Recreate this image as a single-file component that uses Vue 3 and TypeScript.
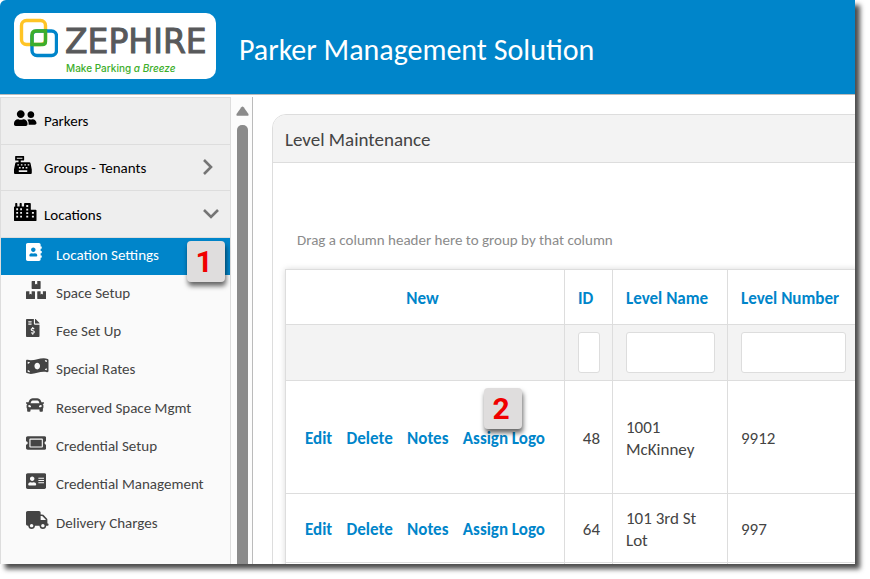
<script setup lang="ts">
import { ref } from 'vue'

interface Icon {
  w: number
  d: string
}

interface Row {
  id: number
  name: string
  number: string
  step?: number
  tall?: boolean
}

const icons: Record<string, Icon> = {
  users: {
    w: 640,
    d: 'M192 256c61.9 0 112-50.1 112-112S253.9 32 192 32 80 82.1 80 144s50.1 112 112 112zm76.8 32h-8.3c-20.8 10-43.9 16-68.5 16s-47.6-6-68.5-16h-8.3C51.6 288 0 339.6 0 403.2V432c0 26.5 21.5 48 48 48h288c26.5 0 48-21.5 48-48v-28.8c0-63.6-51.6-115.2-115.2-115.2zM480 256c53 0 96-43 96-96s-43-96-96-96-96 43-96 96 43 96 96 96zm48 32h-3.8c-13.9 4.8-28.6 8-44.2 8s-30.3-3.2-44.2-8H432c-20.4 0-39.2 5.9-55.7 15.4 24.4 26.3 39.7 61.2 39.7 99.8v38.4c0 2.2-.5 4.3-.6 6.4H592c26.5 0 48-21.5 48-48 0-61.9-50.1-112-112-112z',
  },
  register: {
    w: 512,
    d: 'M48 0h224a16 16 0 0 1 16 16v96a16 16 0 0 1-16 16h-80v48h240a40 40 0 0 1 40 34l34 174v96a32 32 0 0 1-32 32H32a32 32 0 0 1-32-32v-96l34-174a40 40 0 0 1 40-34h54v-48H48a16 16 0 0 1-16-16V16A16 16 0 0 1 48 0zM80 48v32h160V48zM96 232v40h44v-40zM196 232v40h44v-40zM296 232v40h44v-40zM390 232v40h44v-40zM140 312v40h48v-40zM236 312v40h48v-40zM332 312v40h48v-40zM136 408v48h240v-48z',
  },
  city: {
    w: 640,
    d: 'M48 0h32q14 0 14 14v82h66V14q0-14 14-14h32q14 0 14 14v82h66V24q0-24 24-24h144q24 0 24 24v168h138q24 0 24 24v272q0 24-24 24H24q-24 0-24-24V120q0-24 24-24h10V14Q34 0 48 0zM64 152v52h52v-52zM176 152v52h52v-52zM64 256v52h52v-52zM176 256v52h52v-52zM64 360v52h52v-52zM176 360v52h52v-52zM348 60v52h56V60zM348 160v52h56v-52zM348 260v52h56v-52zM348 360v52h56v-52zM510 256v52h56v-52zM510 360v52h56v-52z',
  },
  book: {
    w: 448,
    d: 'M436 160c6.6 0 12-5.4 12-12v-40c0-6.6-5.4-12-12-12h-20V48c0-26.5-21.5-48-48-48H48C21.5 0 0 21.5 0 48v416c0 26.5 21.5 48 48 48h320c26.5 0 48-21.5 48-48v-48h20c6.6 0 12-5.4 12-12v-40c0-6.6-5.4-12-12-12h-20v-64h20c6.6 0 12-5.4 12-12v-40c0-6.6-5.4-12-12-12h-20v-64h20zm-228-32c35.3 0 64 28.7 64 64s-28.7 64-64 64-64-28.7-64-64 28.7-64 64-64zm112 236.8c0 10.6-10 19.2-22.4 19.2H118.4C106 384 96 375.4 96 364.8v-19.2c0-31.8 30.1-57.6 67.2-57.6h5c12.3 5.1 25.7 8 39.8 8s27.6-2.9 39.8-8h5c37.1 0 67.2 25.8 67.2 57.6v19.2z',
  },
  boxes: {
    w: 576,
    d: 'M560 288h-80v96l-32-21.3-32 21.3v-96h-80c-8.8 0-16 7.2-16 16v192c0 8.8 7.2 16 16 16h224c8.8 0 16-7.2 16-16V304c0-8.8-7.2-16-16-16zm-384-64h224c8.8 0 16-7.2 16-16V16c0-8.8-7.2-16-16-16h-80v96l-32-21.3L256 96V0h-80c-8.8 0-16 7.2-16 16v192c0 8.8 7.2 16 16 16zm64 64h-80v96l-32-21.3L96 384v-96H16c-8.8 0-16 7.2-16 16v192c0 8.8 7.2 16 16 16h224c8.8 0 16-7.2 16-16V304c0-8.8-7.2-16-16-16z',
  },
  invoice: {
    w: 384,
    d: 'M377 105L279.1 7c-4.5-4.5-10.6-7-17-7H256v128h128v-6.1c0-6.3-2.5-12.4-7-16.9zm-153 31V0H24C10.7 0 0 10.7 0 24v464c0 13.3 10.7 24 24 24h336c13.3 0 24-10.7 24-24V160H248c-13.2 0-24-10.8-24-24zM64 72c0-4.42 3.58-8 8-8h80c4.42 0 8 3.58 8 8v16c0 4.42-3.58 8-8 8H72c-4.42 0-8-3.58-8-8V72zm0 80v-16c0-4.42 3.58-8 8-8h80c4.42 0 8 3.58 8 8v16c0 4.42-3.58 8-8 8H72c-4.42 0-8-3.58-8-8zm144 263.88V440c0 4.42-3.58 8-8 8h-16c-4.42 0-8-3.58-8-8v-24.29c-11.29-.58-22.27-4.52-31.37-11.35-3.9-2.93-4.1-8.77-.57-12.14l11.75-11.21c2.77-2.64 6.89-2.76 10.13-.73 3.87 2.42 8.26 3.72 12.82 3.72h28.11c6.5 0 11.8-5.92 11.8-13.19 0-5.95-3.61-11.19-8.77-12.73l-45-13.5c-18.59-5.58-31.58-23.42-31.58-43.39 0-24.52 19.05-44.44 42.67-45.07V232c0-4.42 3.58-8 8-8h16c4.42 0 8 3.58 8 8v24.29c11.29.58 22.27 4.51 31.37 11.35 3.9 2.93 4.1 8.77.57 12.14l-11.75 11.21c-2.77 2.64-6.89 2.76-10.13.73-3.87-2.43-8.26-3.72-12.82-3.72h-28.11c-6.5 0-11.8 5.92-11.8 13.19 0 5.95 3.61 11.19 8.77 12.73l45 13.5c18.59 5.58 31.58 23.42 31.58 43.39 0 24.53-19.05 44.44-42.67 45.07z',
  },
  money: {
    w: 640,
    d: 'M621.16 54.46C582.37 38.19 543.55 32 504.75 32c-123.17-.01-246.33 62.34-369.5 62.34-30.89 0-61.76-3.92-92.65-13.72-3.47-1.1-6.95-1.62-10.35-1.62C15.04 79 0 92.32 0 110.81v317.26c0 12.63 7.23 24.6 18.84 29.46C57.63 473.81 96.45 480 135.25 480c123.17 0 246.34-62.35 369.51-62.35 30.89 0 61.76 3.92 92.65 13.72 3.47 1.1 6.95 1.62 10.35 1.62 17.21 0 32.25-13.32 32.25-31.81V83.93c-.01-12.64-7.24-24.6-18.85-29.47zM48 132.22c20.12 5.04 41.12 7.57 62.72 8.93C104.84 170.54 79 192.69 48 192.69v-60.47zm0 285v-47.78c34.37 0 62.18 27.27 63.71 61.4-22.53-1.81-43.59-6.31-63.71-13.62zM320 352c-44.19 0-80-42.99-80-96 0-53.02 35.82-96 80-96s80 42.98 80 96c0 53.03-35.83 96-80 96zm272 27.78c-17.52-4.39-35.71-6.85-54.32-8.44 5.87-26.08 27.5-45.88 54.32-49.28v57.72zm0-236.11c-30.89-3.91-54.86-29.7-55.81-61.55 19.54 2.17 38.09 6.23 55.81 12.66v48.89z',
  },
  car: {
    w: 512,
    d: 'M499.99 176h-59.87l-16.64-41.6C406.38 91.63 365.57 64 319.5 64h-127c-46.06 0-86.88 27.63-103.99 70.4L71.87 176H12.01C4.2 176-1.53 183.34.37 190.91l6 24C7.7 220.25 12.5 224 18.01 224h20.07C24.65 235.73 16 252.78 16 272v48c0 16.12 6.16 30.67 16 41.93V416c0 17.67 14.33 32 32 32h32c17.67 0 32-14.33 32-32v-32h256v32c0 17.67 14.33 32 32 32h32c17.67 0 32-14.33 32-32v-54.07c9.84-11.25 16-25.8 16-41.93v-48c0-19.22-8.65-36.27-22.07-48H494c5.51 0 10.31-3.75 11.64-9.09l6-24c1.89-7.57-3.84-14.91-11.65-14.91zm-352.06-17.83c7.29-18.22 24.94-30.17 44.57-30.17h127c19.63 0 37.28 11.95 44.57 30.17L384 208H128l19.93-49.83zM96 319.8c-19.2 0-32-12.76-32-31.9S76.8 256 96 256s48 28.71 48 47.85-28.8 15.95-48 15.95zm320 0c-19.2 0-48 3.19-48-15.95S396.8 256 416 256s32 12.76 32 31.9-12.8 31.9-32 31.9z',
  },
  ticket: {
    w: 576,
    d: 'M128 160h320v192H128V160zm400 96c0 26.51 21.49 48 48 48v96c0 26.51-21.49 48-48 48H48c-26.51 0-48-21.49-48-48v-96c26.51 0 48-21.49 48-48s-21.49-48-48-48v-96c0-26.51 21.49-48 48-48h480c26.51 0 48 21.49 48 48v96c-26.51 0-48 21.49-48 48zm-48-104c0-13.255-10.745-24-24-24H120c-13.255 0-24 10.745-24 24v208c0 13.255 10.745 24 24 24h336c13.255 0 24-10.745 24-24V152z',
  },
  card: {
    w: 576,
    d: 'M528 32H48C21.5 32 0 53.5 0 80v352c0 26.5 21.5 48 48 48h480c26.5 0 48-21.5 48-48V80c0-26.5-21.5-48-48-48zm-352 96c35.3 0 64 28.7 64 64s-28.7 64-64 64-64-28.7-64-64 28.7-64 64-64zm112 236.8c0 10.6-10 19.2-22.4 19.2H86.4C74 384 64 375.4 64 364.8v-19.2c0-31.8 30.1-57.6 67.2-57.6h5c12.3 5.1 25.7 8 39.8 8s27.6-2.9 39.8-8h5c37.1 0 67.2 25.8 67.2 57.6v19.2zM352 288h160v32H352zM352 224h160v32H352zM352 160h160v32H352z',
  },
  truck: {
    w: 640,
    d: 'M624 352h-16V243.9c0-12.7-5.1-24.9-14.1-33.9L494 110.1c-9-9-21.2-14.1-33.9-14.1H416V48c0-26.5-21.5-48-48-48H48C21.5 0 0 21.5 0 48v320c0 26.5 21.5 48 48 48h16c0 53 43 96 96 96s96-43 96-96h128c0 53 43 96 96 96s96-43 96-96h48c8.8 0 16-7.2 16-16v-32c0-8.8-7.2-16-16-16zM160 464c-26.5 0-48-21.5-48-48s21.5-48 48-48 48 21.5 48 48-21.5 48-48 48zm320 0c-26.5 0-48-21.5-48-48s21.5-48 48-48 48 21.5 48 48-21.5 48-48 48zm80-208H416V144h44.1l99.9 99.9V256z',
  },
}

const sections = [
  { label: 'Parkers', icon: 'users', arrow: '' },
  { label: 'Groups - Tenants', icon: 'register', arrow: 'M4 3l7 7-7 7' },
  { label: 'Locations', icon: 'city', arrow: 'M4 6l7 7 7-7' },
]

const pages = [
  { label: 'Location Settings', icon: 'book', step: 1 },
  { label: 'Space Setup', icon: 'boxes' },
  { label: 'Fee Set Up', icon: 'invoice' },
  { label: 'Special Rates', icon: 'money' },
  { label: 'Reserved Space Mgmt', icon: 'car' },
  { label: 'Credential Setup', icon: 'ticket' },
  { label: 'Credential Management', icon: 'card' },
  { label: 'Delivery Charges', icon: 'truck' },
]

const current = ref('Location Settings')

const rows: Row[] = [
  { id: 48, name: '1001 McKinney', number: '9912', step: 2, tall: true },
  { id: 64, name: '101 3rd St Lot', number: '997' },
]

const filters = ref({ id: '', name: '', number: '' })
</script>

<template>
  <div class="stage">
    <div class="window">
      <header class="top">
        <a class="brand" href="#">
          <svg class="mark" viewBox="0 0 39 40" aria-hidden="true">
            <rect x="2.5" y="2.5" width="24" height="24" rx="5" fill="none" stroke="#ffc425" stroke-width="3.4" />
            <rect x="13" y="13" width="24.5" height="24.5" rx="5" fill="none" stroke="#0085ca" stroke-width="3.4" />
            <path d="M13 26.5V17q0-4 4-4h9.500v10.500q0 3-3 3z" fill="none" stroke="#3dae2b" stroke-width="3.4" />
          </svg>
          <span class="words">
            <span class="name">ZEPHIRE</span>
            <span class="tag">Make Parking <em>a Breeze</em></span>
          </span>
        </a>
        <h1>Parker Management Solution</h1>
      </header>

      <div class="body">
        <nav class="side">
          <div class="sections">
            <button v-for="s in sections" :key="s.label" type="button" class="section">
              <span class="icon">
                <svg :viewBox="`0 0 ${icons[s.icon].w} 512`" height="18" aria-hidden="true">
                  <path :d="icons[s.icon].d" fill="currentColor" fill-rule="evenodd" />
                </svg>
              </span>
              <span class="label">{{ s.label }}</span>
              <svg v-if="s.arrow" class="arrow" viewBox="0 0 24 22" width="24" height="22" aria-hidden="true">
                <path :d="s.arrow" fill="none" stroke="#757575" stroke-width="2.6" />
              </svg>
            </button>
          </div>
          <ul class="pages">
            <li v-for="p in pages" :key="p.label">
              <a href="#" :class="{ active: current === p.label }" @click.prevent="current = p.label">
                <span class="icon">
                  <svg :viewBox="`0 0 ${icons[p.icon].w} 512`" height="18" aria-hidden="true">
                    <path :d="icons[p.icon].d" fill="currentColor" fill-rule="evenodd" />
                  </svg>
                </span>
                <span class="label">{{ p.label }}</span>
              </a>
              <span v-if="p.step" class="step step-nav">{{ p.step }}</span>
            </li>
          </ul>
        </nav>

        <div class="scroll" aria-hidden="true">
          <svg viewBox="0 0 13 10" width="13" height="10">
            <path d="M5.3 1.2q1.2-1.6 2.4 0l4.6 6.6q.9 2-1 2H1.7q-1.9 0-1-2z" fill="#8b8b8b" />
          </svg>
          <span class="thumb"></span>
        </div>

        <main class="content">
          <section class="panel">
            <h2>Level Maintenance</h2>
            <div class="inner">
              <p class="hint">Drag a column header here to group by that column</p>
              <table>
                <colgroup>
                  <col class="c-act" />
                  <col class="c-id" />
                  <col class="c-name" />
                  <col />
                </colgroup>
                <thead>
                  <tr class="heads">
                    <th class="new"><a href="#">New</a></th>
                    <th>ID</th>
                    <th>Level Name</th>
                    <th>Level Number</th>
                  </tr>
                  <tr class="filters">
                    <td></td>
                    <td><input v-model="filters.id" type="text" aria-label="ID" /></td>
                    <td><input v-model="filters.name" type="text" aria-label="Level Name" /></td>
                    <td><input v-model="filters.number" type="text" aria-label="Level Number" /></td>
                  </tr>
                </thead>
                <tbody>
                  <tr v-for="r in rows" :key="r.id" :class="{ tall: r.tall }">
                    <td class="act">
                      <div class="links">
                        <a href="#">Edit</a>
                        <a href="#">Delete</a>
                        <a href="#">Notes</a>
                        <a href="#">Assign Logo</a>
                        <span v-if="r.step" class="step step-row">{{ r.step }}</span>
                      </div>
                    </td>
                    <td class="num">{{ r.id }}</td>
                    <td>{{ r.name }}</td>
                    <td>{{ r.number }}</td>
                  </tr>
                  <tr aria-hidden="true"><td></td><td></td><td></td><td></td></tr>
                </tbody>
              </table>
            </div>
          </section>
        </main>
      </div>
    </div>
  </div>
</template>

<style>
body {
  margin: 0;
  background: #fff;
}
</style>

<style scoped>
* {
  box-sizing: border-box;
}

.stage {
  height: 100vh;
  padding: 0 15px 15px 0;
  overflow: hidden;
}

.window {
  display: flex;
  flex-direction: column;
  height: 100%;
  overflow: hidden;
  border-top-left-radius: 6px;
  background: #fff;
  color: #444;
  font-family: Carlito, Lato, sans-serif;
  font-size: 17px;
  box-shadow: 5px 5px 5px rgba(0, 0, 0, 0.7);
}

a {
  color: #0085ca;
  text-decoration: none;
}

.top {
  display: flex;
  flex: none;
  align-items: center;
  gap: 23px;
  height: 95px;
  padding: 0 14px 2px;
  border-bottom: 1px solid #bbb;
  background: #0085ca;
}

.brand {
  display: flex;
  gap: 7px;
  width: 202px;
  height: 66px;
  padding: 5px;
  border-radius: 10px;
  background: #fff;
}

.mark {
  flex: none;
  width: 39px;
  height: 40px;
}

.words {
  display: flex;
  flex-direction: column;
  padding-top: 6px;
}

.name {
  color: #58595b;
  font-family: "DejaVu Sans", sans-serif;
  font-size: 33px;
  line-height: 36px;
  -webkit-text-stroke: 1px #58595b;
}

.tag {
  padding-left: 1px;
  color: #3dae2b;
  font-family: Inter, sans-serif;
  font-size: 10px;
  font-weight: 500;
  line-height: 16px;
  white-space: nowrap;
}

h1 {
  margin: 0;
  padding-top: 6px;
  color: #fff;
  font-size: 30px;
  font-weight: 400;
  white-space: nowrap;
}

.body {
  display: flex;
  flex: 1;
  min-height: 0;
  padding-top: 2px;
}

.side {
  flex: none;
  width: 231px;
  border: 1px solid #ddd;
  border-bottom: 0;
  background: #fafafa;
  font-size: 15px;
}

.sections {
  display: grid;
  grid-template-rows: repeat(3, 1fr);
  height: 140px;
}

.section {
  display: flex;
  align-items: center;
  width: 100%;
  padding: 1px 6px 0 13px;
  border: 0;
  border-bottom: 1px solid #ddd;
  background: #eee;
  color: #000;
  font: inherit;
  text-align: left;
}

.icon {
  display: flex;
  flex: none;
  width: 30px;
  padding-bottom: 6px;
}

.label {
  flex: 1;
  white-space: nowrap;
}

.arrow {
  flex: none;
}

.pages {
  display: grid;
  grid-template-rows: repeat(8, 1fr);
  height: 307px;
  margin: 0;
  padding: 0;
  list-style: none;
}

.pages li {
  position: relative;
}

.pages a {
  display: flex;
  align-items: center;
  height: 100%;
  padding: 0 6px 6px 25px;
  color: #444;
}

.pages a.active {
  height: 37px;
  padding-bottom: 4px;
  background: #0085ca;
  color: #fff;
}

.step {
  position: absolute;
  z-index: 2;
  width: 38px;
  height: 41px;
  padding-right: 4px;
  border-radius: 4px;
  background: #dfdddd;
  color: #f00000;
  font-family: Roboto, sans-serif;
  font-size: 30px;
  font-weight: 700;
  line-height: 42px;
  text-align: center;
  box-shadow: 1px 4px 5px rgba(0, 0, 0, 0.6);
}

.step-nav {
  top: 3px;
  right: 5px;
}

.step-row {
  right: 23px;
  bottom: 21px;
}

.scroll {
  display: flex;
  flex: none;
  flex-direction: column;
  align-items: center;
  gap: 9px;
  width: 22px;
  padding: 9px 0 0 2px;
  border-right: 1px solid #bbb;
  background: #fcfcfc;
}

.thumb {
  flex: 1;
  width: 11px;
  border-radius: 5px 5px 0 0;
  background: #8b8b8b;
}

.content {
  flex: 1;
  min-width: 0;
  padding: 17px 0 0 19px;
  overflow: hidden;
}

.panel {
  min-width: 600px;
  min-height: 100%;
  border: 1px solid #ddd;
  border-radius: 14px 0 0 0;
}

h2 {
  margin: 0;
  padding: 2px 12px 0;
  border-bottom: 1px solid #ddd;
  border-radius: 13px 0 0 0;
  background: #f3f3f3;
  font-size: 19px;
  font-weight: 400;
  line-height: 45px;
}

.inner {
  padding: 55px 12px 0;
}

.hint {
  margin: 0;
  padding: 0 12px;
  color: #8b8b8b;
  font-size: 15px;
  line-height: 44px;
}

table {
  width: 100%;
  margin-top: 7px;
  border-collapse: collapse;
  table-layout: fixed;
  line-height: 22px;
  box-shadow: 0 0 6px rgba(0, 0, 0, 0.15);
}

.c-act {
  width: 279px;
}

.c-id {
  width: 48px;
}

.c-name {
  width: 115px;
}

th,
td {
  padding: 4px 12px 0 13px;
  border: 1px solid #ddd;
  text-align: left;
}

th {
  color: #0085ca;
  font-weight: 700;
  white-space: nowrap;
}

.new {
  padding-right: 18px;
  text-align: center;
}

.heads {
  height: 55px;
}

.filters {
  height: 56px;
  background: #f3f3f3;
}

.filters td {
  padding-top: 0;
}

input {
  display: block;
  width: 100%;
  height: 41px;
  padding: 0 4px;
  border: 1px solid #ddd;
  border-radius: 3px;
  background: #fff;
  color: inherit;
  font: inherit;
}

tbody tr {
  height: 69px;
}

tbody tr.tall {
  height: 113px;
}

td.act {
  padding-right: 19px;
  padding-left: 19px;
}

.links {
  position: relative;
  display: flex;
  justify-content: space-between;
  font-weight: 700;
  white-space: nowrap;
}

td.num {
  text-align: right;
}
</style>
